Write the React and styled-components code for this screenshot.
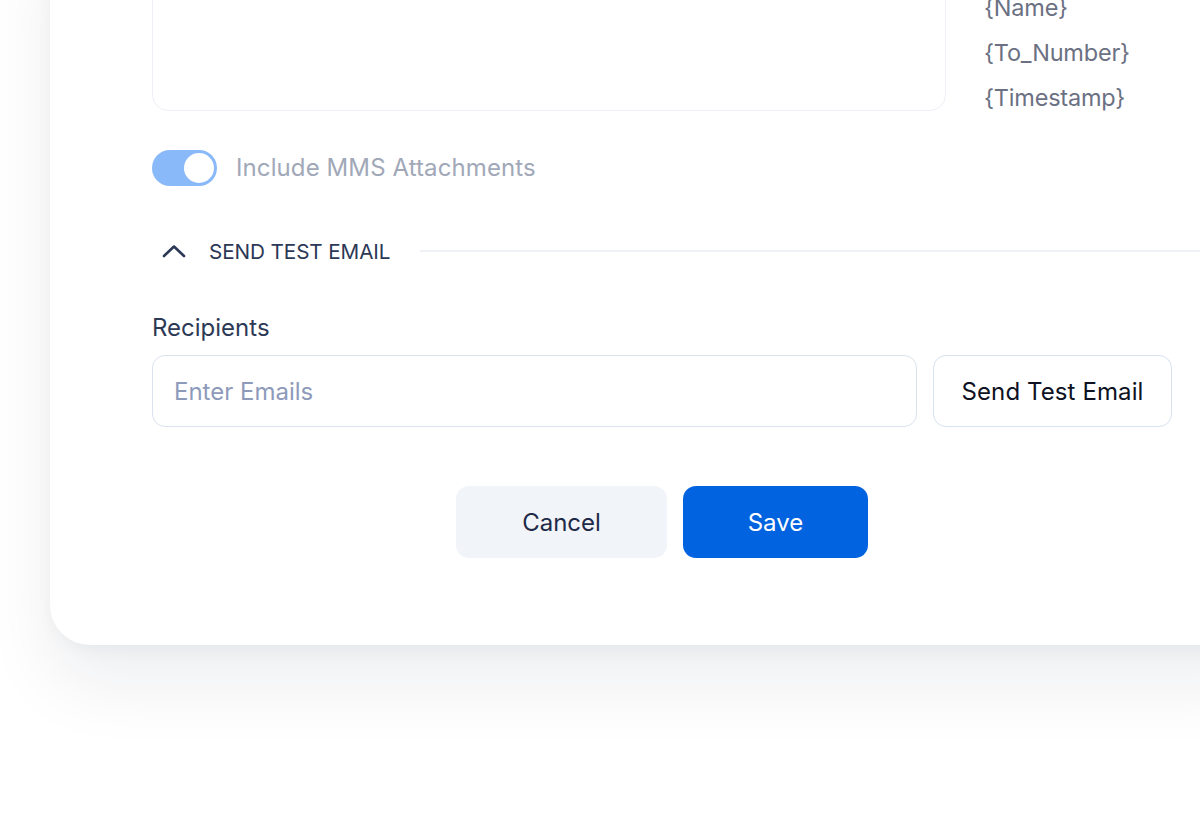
import styled, { createGlobalStyle } from 'styled-components'

const GlobalStyle = createGlobalStyle`
    html, body {
        margin: 0;
        padding: 0;
        background: #ffffff;
        overflow: hidden;
    }
    body {
        font-family: Inter, "Noto Sans", Arial, sans-serif;
        -webkit-font-smoothing: antialiased;
    }
`

const Page = styled.div`
    width: 1200px;
    height: 823px;
    overflow: hidden;
    background: #ffffff;
`

const Card = styled.div`
    margin: -100px 0 0 50px;
    width: 1224px;
    box-sizing: border-box;
    padding: 40px 102px 87px;
    background: #ffffff;
    border-radius: 40px;
    box-shadow: 0 40px 70px rgba(20, 30, 50, 0.07), 0 6px 16px rgba(20, 30, 50, 0.04);
    display: flex;
    flex-direction: column;
`

const MessageRow = styled.div`
    display: flex;
    align-items: flex-start;
    gap: 38px;
`

const TextArea = styled.div`
    width: 794px;
    height: 171px;
    box-sizing: border-box;
    border: 1.5px solid #edf0f6;
    border-radius: 16px;
`

const Variables = styled.ul`
    list-style: none;
    margin: 0;
    padding: 0;
    height: 171px;
    display: flex;
    flex-direction: column;
`

const Variable = styled.li`
    font-size: 23.5px;
    line-height: 45px;
    color: #6b7183;
    letter-spacing: -0.2px;
    white-space: nowrap;
`

const ToggleRow = styled.label`
    display: flex;
    align-items: center;
    gap: 19px;
    margin-top: 39px;
`

const Toggle = styled.span`
    width: 65px;
    height: 36px;
    border-radius: 18px;
    background: ${p => (p.$on ? '#8ab9f9' : '#d9dee8')};
    display: flex;
    align-items: center;
    justify-content: ${p => (p.$on ? 'flex-end' : 'flex-start')};
    padding: 0 3px;
    box-sizing: border-box;
`

const Knob = styled.span`
    width: 30px;
    height: 30px;
    border-radius: 50%;
    background: #ffffff;
`

const ToggleLabel = styled.span`
    font-size: 24px;
    line-height: 30px;
    color: #a1a8b8;
    letter-spacing: 0.1px;
`

const SectionHeader = styled.div`
    display: flex;
    align-items: center;
    height: 40px;
    margin: 45px -102px 0 0;
`

const Chevron = styled.span`
    width: 44px;
    display: flex;
    justify-content: center;
    margin-right: 13px;
    color: #2b3856;
`

const SectionTitle = styled.span`
    font-size: 20.7px;
    color: #2b3856;
    text-transform: uppercase;
    letter-spacing: -0.1px;
`

const Divider = styled.span`
    flex: 1;
    height: 2px;
    margin-left: 30px;
    background: #eef1f6;
`

const FieldLabel = styled.div`
    margin-top: 42px;
    font-size: 24px;
    line-height: 30px;
    color: #2d3a55;
`

const FieldRow = styled.div`
    display: flex;
    gap: 16px;
    margin-top: 12px;
`

const Input = styled.input`
    width: 765px;
    height: 72px;
    box-sizing: border-box;
    border: 1.5px solid #dbe2ef;
    border-radius: 13px;
    padding: 0 21px;
    font-family: inherit;
    font-size: 24px;
    color: #2d3a55;
    outline: none;
    &::placeholder {
        color: #8e9aba;
    }
`

const OutlineButton = styled.button`
    flex: 1;
    height: 72px;
    box-sizing: border-box;
    border: 1.5px solid #d8e2f1;
    border-radius: 13px;
    background: #ffffff;
    font-family: inherit;
    font-size: 24px;
    color: #0e1222;
    letter-spacing: 0.1px;
`

const Actions = styled.div`
    display: flex;
    justify-content: center;
    gap: 16px;
    margin-top: 59px;
`

const ActionButton = styled.button`
    width: ${p => p.$width}px;
    height: 72px;
    border: none;
    border-radius: 13px;
    font-family: inherit;
    font-size: 24px;
    background: ${p => (p.$primary ? '#0263e0' : '#f1f4f9')};
    color: ${p => (p.$primary ? '#ffffff' : '#1f2a48')};
`

const App = () => {
    return (
        <Page>
            <GlobalStyle />
            <Card>
                <MessageRow>
                    <TextArea />
                    <Variables>
                        <Variable>{'{From_Number}'}</Variable>
                        <Variable>{'{Name}'}</Variable>
                        <Variable>{'{To_Number}'}</Variable>
                        <Variable>{'{Timestamp}'}</Variable>
                    </Variables>
                </MessageRow>

                <ToggleRow>
                    <Toggle $on>
                        <Knob />
                    </Toggle>
                    <ToggleLabel>Include MMS Attachments</ToggleLabel>
                </ToggleRow>

                <SectionHeader>
                    <Chevron>
                        <svg width="24" height="14" viewBox="0 0 24 14" fill="none">
                            <path d="M2 12L12 2.5L22 12" stroke="currentColor" strokeWidth="2.6" strokeLinecap="round" strokeLinejoin="round" />
                        </svg>
                    </Chevron>
                    <SectionTitle>Send Test Email</SectionTitle>
                    <Divider />
                </SectionHeader>

                <FieldLabel>Recipients</FieldLabel>
                <FieldRow>
                    <Input placeholder="Enter Emails" />
                    <OutlineButton>Send Test Email</OutlineButton>
                </FieldRow>

                <Actions>
                    <ActionButton $width={211}>Cancel</ActionButton>
                    <ActionButton $width={185} $primary>Save</ActionButton>
                </Actions>
            </Card>
        </Page>
    )
}

export default App
